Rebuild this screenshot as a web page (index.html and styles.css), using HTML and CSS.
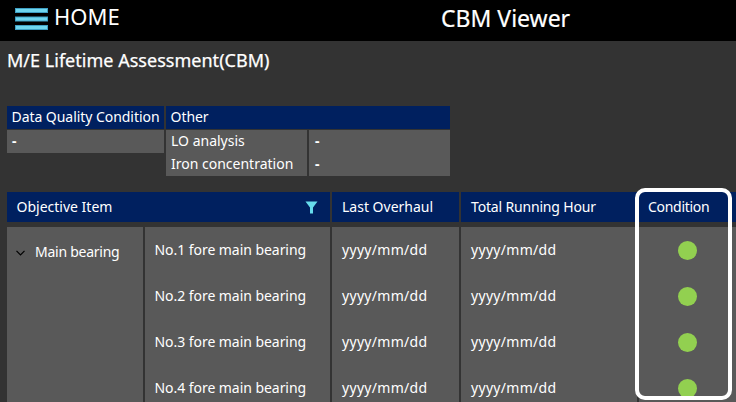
FILE: index.html
```html
<!DOCTYPE html>
<html lang="en">
<head>
<meta charset="utf-8">
<title>CBM Viewer</title>
<link rel="stylesheet" href="styles.css">
</head>
<body>
<header class="topbar">
  <div class="home">
    <svg class="menu-icon" width="34" height="24" viewBox="0 0 34 24"><rect x="0.5" y="0.5" width="32" height="4" /><rect x="0.5" y="9" width="32" height="4" /><rect x="0.5" y="17.5" width="32" height="4" /></svg>
    <span>HOME</span>
  </div>
  <div class="app-title">CBM Viewer</div>
</header>
<main class="content">
  <h1 class="page-title">M/E Lifetime Assessment(CBM)</h1>
  <section class="summary">
    <div class="summary-col dq">
      <div class="head">Data Quality Condition</div>
      <div class="cell val">-</div>
    </div>
    <div class="summary-col other">
      <div class="head">Other</div>
      <div class="other-grid">
        <div class="cell">LO analysis</div><div class="cell val">-</div>
        <div class="cell">Iron concentration</div><div class="cell val">-</div>
      </div>
    </div>
  </section>
  <section class="grid-wrap">
    <div class="grid-head">
      <div class="gh c-obj">Objective Item
        <svg class="filter" width="13" height="13" viewBox="0 0 13 13"><path d="M0.5 0.5H12.5L8 6.5V12.5H5V6.5Z"/></svg>
      </div>
      <div class="gh c-last">Last Overhaul</div>
      <div class="gh c-total">Total Running Hour</div>
    </div>
    <div class="grid-body">
      <div class="group">
        <svg class="chev" width="9" height="6" viewBox="0 0 9 6"><path d="M0.5 0.8L4.5 4.8L8.5 0.8"/></svg>
        <span>Main bearing</span>
      </div>
      <div class="rows">
        <div class="col c-name">
          <div class="r">No.1 fore main bearing</div><div class="r">No.2 fore main bearing</div><div class="r">No.3 fore main bearing</div><div class="r">No.4 fore main bearing</div>
        </div>
        <div class="col c-last">
          <div class="r">yyyy/mm/dd</div><div class="r">yyyy/mm/dd</div><div class="r">yyyy/mm/dd</div><div class="r">yyyy/mm/dd</div>
        </div>
        <div class="col c-total">
          <div class="r">yyyy/mm/dd</div><div class="r">yyyy/mm/dd</div><div class="r">yyyy/mm/dd</div><div class="r">yyyy/mm/dd</div>
        </div>
        <div class="col c-cond">
          <div class="r"><i class="dot"></i></div><div class="r"><i class="dot"></i></div><div class="r"><i class="dot"></i></div><div class="r"><i class="dot"></i></div>
        </div>
      </div>
    </div>
    <div class="cond-ring"><span class="cond-label">Condition</span></div>
  </section>
</main>
</body>
</html>
```
FILE: styles.css
```css
* { box-sizing: border-box; }
html, body { margin: 0; height: 100%; overflow: hidden; }
body { width: 736px; height: 402px; background: #333; color: #fff; font-family: "Noto Sans", "DejaVu Sans", sans-serif; font-size: 14px; }
.topbar { height: 41px; background: #000; display: flex; align-items: flex-start; position: relative; }
.home { display: flex; align-items: flex-start; margin-left: 15px; font-size: 22px; line-height: 33px; gap: 5px; }
.menu-icon { fill: #6fd6ee; stroke: #3f9fc4; stroke-width: 1; margin-top: 8px; }
.app-title { position: absolute; left: 441px; top: 3px; font-size: 23px; line-height: 30px; -webkit-text-stroke: 0.2px #fff; }
.content { padding: 0 0 0 7px; }
.page-title { margin: 7px 0 0; font-size: 18px; line-height: 24px; font-weight: 400; height: 58px; letter-spacing: 0.02px; -webkit-text-stroke: 0.25px #fff; }
.summary { display: flex; gap: 2px; }
.head { background: #00205f; height: 23px; line-height: 22px; padding-left: 4.5px; letter-spacing: -0.05px; }
.cell { background: #595959; height: 23px; line-height: 21px; padding-left: 5px; }
.val { font-weight: 700; padding-left: 5px; }
.dq { width: 157px; }
.other { width: 284px; }
.other-grid { display: grid; grid-template-columns: 141px 141px; column-gap: 2px; margin-top: 1px; }
.dq .cell { margin-top: 1px; }
.other-grid .val { padding-left: 6px; }
.grid-wrap { margin-top: 16px; position: relative; width: 729px; }
.grid-head { display: flex; height: 30px; gap: 2px; }
.gh { background: #00205f; line-height: 30px; padding-left: 10px; position: relative; }
.c-obj { width: 323px; padding-left: 9.5px; }
.c-last { width: 127px; }
.c-total { flex: 1; }
.gh.c-total { letter-spacing: -0.17px; }
.filter { position: absolute; right: 12px; top: 9px; fill: #66dcec; }
.grid-body { display: flex; margin-top: 5px; gap: 2px; height: 175px; }
.group { width: 136px; background: #595959; display: flex; align-items: flex-start; padding: 16px 0 0 9px; gap: 10px; }
.chev { margin-top: 7px; fill: none; stroke: #000; stroke-width: 1.2; flex: none; }
.group span { line-height: 18px; letter-spacing: -0.25px; }
.rows { display: flex; flex: 1; gap: 2px; }
.col { background: #595959; padding-top: 0; }
.c-name { width: 185px; }
.c-name .r { letter-spacing: -0.05px; padding-left: 9.5px; }
.rows .c-last .r, .rows .c-total .r { letter-spacing: 0.3px; }
.rows .c-total { flex: none; width: 176px; }
.c-cond { flex: 1; }
.r { height: 46px; line-height: 46px; padding-left: 10px; }
.c-cond .r { padding-left: 0; display: flex; align-items: center; justify-content: center; padding-right: 0; }
.dot { width: 19px; height: 19px; border-radius: 50%; background: #92d050; display: block; }
.cond-ring { position: absolute; left: 628px; top: -4px; width: 97px; height: 212px; border: 4px solid #fff; border-radius: 10px; }
.cond-label { position: absolute; left: 9px; top: 0; line-height: 30px; letter-spacing: -0.3px; }
```
